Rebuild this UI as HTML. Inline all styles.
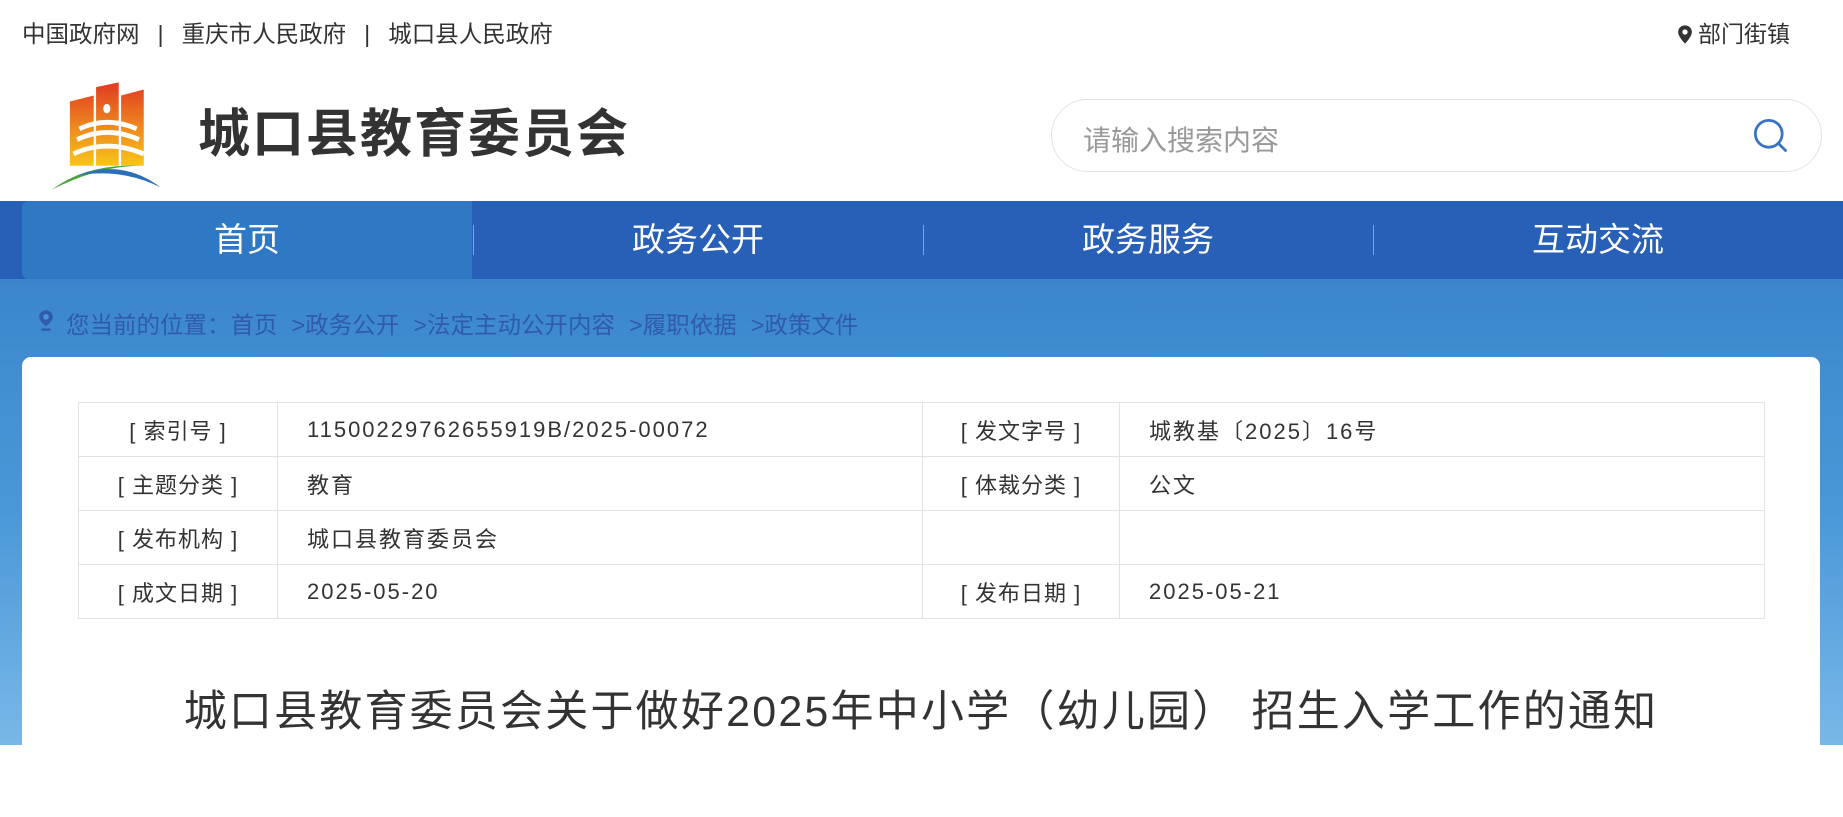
<!DOCTYPE html>
<html><head><meta charset="utf-8">
<style>
*{margin:0;padding:0;box-sizing:border-box}
body{width:1843px;height:745px;overflow:hidden;font-family:"Liberation Sans","Noto Sans CJK SC",sans-serif;background:#fff;position:relative}
.top{position:absolute;top:15px;left:22px;font-size:23.5px;color:#333}
.top span{margin:0 18px}
.dept{position:absolute;top:15px;left:1677px;font-size:23px;color:#333}
.title{position:absolute;top:92px;left:198px;font-size:52px;font-weight:bold;color:#333;letter-spacing:2px}
.search{position:absolute;left:1051px;top:99px;width:771px;height:73px;border:1px solid #e3e3e3;border-radius:37px}
.search .ph{position:absolute;left:31px;top:19px;font-size:28px;color:#999}
.nav{position:absolute;top:201px;left:0;width:1843px;height:78px;background:#2760b6}
.nav div{position:absolute;top:0;height:78px;line-height:78px;color:#fff;font-size:33px;text-align:center;width:450px}
.nav .act{background:#2e78c4;border-radius:7px 0 0 7px}
.sep{position:absolute;top:24px;width:1px;height:30px;background:#7fa3d8}
.bg{position:absolute;top:279px;left:0;width:1843px;height:466px;background:linear-gradient(180deg,#3b86cb 0%,#4a98d8 50%,#78b8e8 100%)}
.crumb{position:absolute;top:306px;left:66px;font-size:23.5px;color:#2f5bae}
.crumb b{font-weight:normal;margin-left:14px}
.card{position:absolute;top:357px;left:22px;width:1798px;height:460px;background:#fff;border-radius:9px}
table{position:absolute;top:402px;left:78px;border-collapse:collapse;font-size:22px;color:#333}
td{border:1px solid #e3e3e3;height:54px;padding:0}
td.l{text-align:center;letter-spacing:1px}
td.v{padding-left:29px;letter-spacing:2px}
h1{position:absolute;top:677px;left:22px;width:1798px;text-align:center;font-size:43px;font-weight:normal;color:#333;letter-spacing:2.2px}
</style></head><body>
<div class="top">中国政府网<span>|</span>重庆市人民政府<span>|</span>城口县人民政府</div>
<div class="dept"><svg width="16" height="21" viewBox="0 0 14 18" style="vertical-align:-3px;margin-right:5px"><path d="M7 1C3.5 1 1 3.6 1 6.8 1 11 7 17 7 17s6-6 6-10.2C13 3.6 10.5 1 7 1z" fill="#333"/><circle cx="7" cy="6.8" r="2.3" fill="#fff"/></svg>部门街镇</div>
<svg style="position:absolute;left:46px;top:80px" width="124" height="112" viewBox="0 0 96 94">
<defs><linearGradient id="g" x1="0" y1="0" x2="0" y2="1"><stop offset="0" stop-color="#e03a22"/><stop offset=".55" stop-color="#ef8a1e"/><stop offset="1" stop-color="#f7c51a"/></linearGradient></defs>
<path d="M16 18L36 13V72H16z M38 6L57 2V72H38z M59 13L78 8V72H59z" fill="url(#g)"/>
<ellipse cx="47" cy="24" rx="3" ry="4" fill="#fff"/>
<path d="M24 41Q47 30 72 41M22 50Q47 38 74 50M19 62Q47 49 78 62" stroke="#fff" stroke-width="4" fill="none"/>
<path d="M1 92Q30 70 76 72Q40 72 1 92z" fill="#4aa33a"/>
<path d="M22 80Q60 66 92 90Q60 74 22 80z" fill="#2a6fb8"/>
</svg>
<div class="title">城口县教育委员会</div>
<div class="search"><div class="ph">请输入搜索内容</div>
<svg style="position:absolute;left:700px;top:17px" width="38" height="38" viewBox="0 0 34 34"><circle cx="15" cy="15" r="12" stroke="#3a73c4" stroke-width="2.5" fill="none"/><path d="M24 24L30 30" stroke="#3a73c4" stroke-width="2.5" stroke-linecap="round"/></svg></div>
<div class="nav">
<div class="act" style="left:22px">首页</div>
<div style="left:473px">政务公开</div>
<div style="left:923px">政务服务</div>
<div style="left:1373px">互动交流</div>
<i class="sep" style="left:473px"></i><i class="sep" style="left:923px"></i><i class="sep" style="left:1373px"></i>
</div>
<div class="bg"></div>
<div class="crumb"><svg width="16" height="23" viewBox="0 0 14 20" style="position:absolute;left:-28px;top:3px"><path d="M7 1C3.5 1 1 3.6 1 6.8 1 10.5 7 15 7 15s6-4.5 6-8.2C13 3.6 10.5 1 7 1z" fill="#2f5bae"/><circle cx="7" cy="6.8" r="2.5" fill="#4a96d4"/><rect x="3" y="17" width="8" height="2" fill="#2f5bae"/></svg>您当前的位置：首页<b>&gt;政务公开</b><b>&gt;法定主动公开内容</b><b>&gt;履职依据</b><b>&gt;政策文件</b></div>
<div class="card"></div>
<table>
<tr><td class="l" style="width:199px">[ 索引号 ]</td><td class="v" style="width:645px">11500229762655919B/2025-00072</td><td class="l" style="width:197px">[ 发文字号 ]</td><td class="v" style="width:645px">城教基〔2025〕16号</td></tr>
<tr><td class="l">[ 主题分类 ]</td><td class="v">教育</td><td class="l">[ 体裁分类 ]</td><td class="v">公文</td></tr>
<tr><td class="l">[ 发布机构 ]</td><td class="v">城口县教育委员会</td><td></td><td></td></tr>
<tr><td class="l">[ 成文日期 ]</td><td class="v">2025-05-20</td><td class="l">[ 发布日期 ]</td><td class="v">2025-05-21</td></tr>
</table>
<h1>城口县教育委员会关于做好2025年中小学（幼儿园） 招生入学工作的通知</h1>
</body></html>
